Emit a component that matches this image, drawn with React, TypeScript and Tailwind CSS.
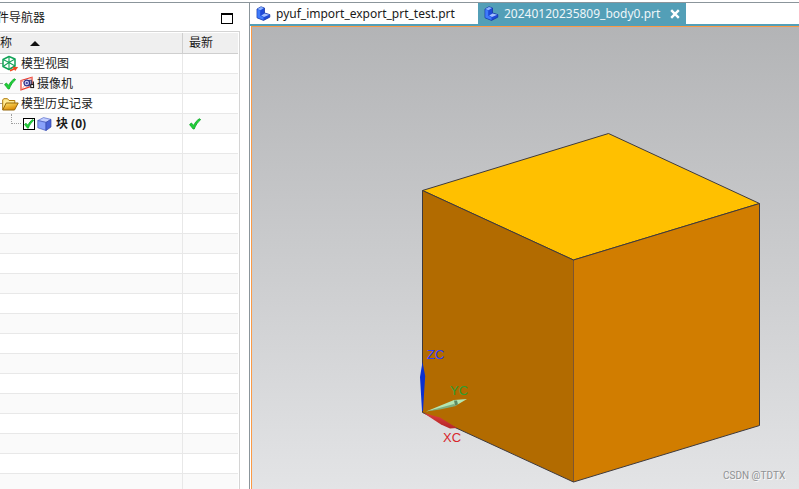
import { useState } from 'react';
import type { ReactNode } from 'react';

const EMPTY_ROWS = 18;

function GreenCheck({ className = 'h-3 w-3' }: { className?: string }) {
  return (
    <svg viewBox="0 0 12 12" className={className} aria-hidden="true">
      <path
        d="M0.6 6.6 2.4 5 4.6 7.4C6 4.6 8 2 10.6 0.7L11.6 1.8C8.8 4 6.8 7 5.2 11L4.2 11Z"
        fill="#1fd136"
        stroke="#12a92c"
        strokeWidth="0.9"
        strokeLinejoin="round"
      />
    </svg>
  );
}

function ModelViewIcon() {
  return (
    <svg viewBox="0 0 17 17" className="h-[17px] w-[17px] shrink-0" fill="none" aria-hidden="true">
      <path
        d="M7 1.5 13 4V11L7 14.5 1 11.5V4.5Z"
        stroke="#12a357"
        strokeWidth="1.5"
        strokeLinejoin="round"
      />
      <path d="M1 4.5 7 7.5 13 4M7 7.5V14.5M7 1.5V7.5L1 11.5M7 7.5 13 11" stroke="#12a357" strokeWidth="1.1" />
      <path d="M8 15.8 13.5 13.3" stroke="#f04a20" strokeWidth="1.6" />
      <path d="M10.5 11.7 16.2 11.9 13.2 16Z" fill="#f04a20" />
    </svg>
  );
}

function CameraIcon() {
  return (
    <svg viewBox="0 0 15 15" className="h-[15px] w-[15px] shrink-0" fill="none" aria-hidden="true">
      <path d="M1 4.5 12 1.2V10L1 13.8Z" fill="#fff" stroke="#ee3a2c" strokeWidth="1.2" />
      <path d="M1 4.5 11 11M1 13.8 12 1.2" stroke="#f28a80" strokeWidth="0.8" />
      <path d="M8 4.8 11.5 4.2V9.5L8 9.8Z" fill="#9a9cc0" stroke="#32325c" strokeWidth="0.8" />
      <circle cx="6.8" cy="7" r="2.8" fill="#c6caf0" stroke="#2c2f86" strokeWidth="1.2" />
      <circle cx="6.8" cy="7" r="1.1" fill="#39399a" />
      <path d="M13.3 5.5V8.5" stroke="#111" strokeWidth="1.2" />
      <rect x="10.8" y="8.6" width="2.8" height="3" fill="#fff" stroke="#111" />
    </svg>
  );
}

function FolderIcon() {
  return (
    <svg viewBox="0 0 17 14" className="h-[14px] w-[17px] shrink-0" aria-hidden="true">
      <defs>
        <linearGradient id="folder" x1="0" y1="0" x2="0.5" y2="1">
          <stop offset="0" stopColor="#ffe56a" />
          <stop offset="1" stopColor="#dc8c08" />
        </linearGradient>
      </defs>
      <path d="M0.7 12.8V3L1.7 1.7H5.5L7 3.5H12.8V6" fill="#ffeb94" stroke="#b07a08" />
      <path d="M0.7 13 4.2 6H16.2L12.5 13Z" fill="url(#folder)" stroke="#94660a" strokeLinejoin="round" />
    </svg>
  );
}

function BlockIcon() {
  return (
    <svg viewBox="0 0 15 14" className="h-[14px] w-[15px] shrink-0" strokeLinejoin="round" aria-hidden="true">
      <path d="M0.8 3.5 6.5 0.6 14 2.4 9 5.4Z" fill="#c3cfff" stroke="#5468c8" strokeWidth="0.7" />
      <path d="M0.8 3.5 9 5.4V13.5L0.8 10.8Z" fill="#8aa2fa" stroke="#4358bc" strokeWidth="0.7" />
      <path d="M9 5.4 14 2.4V10L9 13.5Z" fill="#4a63d6" stroke="#3347ac" strokeWidth="0.7" />
    </svg>
  );
}

function PartIcon() {
  return (
    <svg viewBox="0 0 15 15" className="h-[15px] w-[15px] shrink-0" strokeLinejoin="round" aria-hidden="true">
      <path d="M1 3 5 0.8 8.5 2V7L13.8 8.6V11.2L7.5 14.4 1 11.8Z" fill="#1d49d8" stroke="#1737a6" strokeWidth="0.8" />
      <path d="M1.2 3 5 1 8 2.1 4.4 4.2Z" fill="#8db4ff" />
      <path d="M1.3 3.4 4.2 4.4V9.8L7.5 11.2V14L1.3 11.6Z" fill="#3f7bfa" />
      <path d="M5.2 9.4 8.6 7.5 13.2 8.8 8 11Z" fill="#a3c0ff" />
    </svg>
  );
}

function TreeStub() {
  return <span className="w-0.5 shrink-0 border-t border-dotted border-[#a0a0a0]" />;
}

function TreeRow({ name, latest, odd }: { name?: ReactNode; latest?: ReactNode; odd: boolean }) {
  return (
    <tr className={odd ? 'bg-[#fafafa]' : 'bg-white'}>
      <td className="h-5 border-r border-b border-[#e8e8e8] p-0">{name}</td>
      <td className="h-5 border-b border-[#e8e8e8] p-0">{latest}</td>
    </tr>
  );
}

function Navigator() {
  const [visible, setVisible] = useState(true);

  const rows: { name: ReactNode; latest?: ReactNode }[] = [
    {
      name: (
        <div className="flex items-center">
          <TreeStub />
          <ModelViewIcon />
          <span className="ml-0.5">模型视图</span>
        </div>
      ),
    },
    {
      name: (
        <div className="flex items-center">
          <TreeStub />
          <GreenCheck className="ml-0.5 h-3 w-3 shrink-0" />
          <span className="ml-1 flex items-center gap-0.5">
            <CameraIcon />
            摄像机
          </span>
        </div>
      ),
    },
    {
      name: (
        <div className="flex items-center">
          <TreeStub />
          <FolderIcon />
          <span className="ml-0.5">模型历史记录</span>
        </div>
      ),
    },
    {
      name: (
        <div className="flex h-[19px] items-center pl-[11px]">
          <span className="mr-0.5 h-2.5 w-2.5 self-start border-b border-l border-dotted border-[#a0a0a0]" />
          <label className="flex items-center">
            <span className="relative mr-0.5 flex h-3 w-3">
              <input
                type="checkbox"
                checked={visible}
                onChange={e => setVisible(e.target.checked)}
                className="h-3 w-3 appearance-none border border-black bg-white"
              />
              {visible && <GreenCheck className="pointer-events-none absolute inset-px h-2.5 w-2.5" />}
            </span>
            <BlockIcon />
            <span className="ml-1 font-bold">块 (0)</span>
          </label>
        </div>
      ),
      latest: <GreenCheck className="ml-1.5 h-3 w-3" />,
    },
  ];

  return (
    <aside className="flex w-[249px] shrink-0 flex-col bg-white text-xs text-[#1a1a1a]">
      <div className="flex h-7 shrink-0 items-center justify-between pt-0.5 pr-4">
        <h1 className="-ml-[3px]">件导航器</h1>
        <button type="button" aria-label="Maximize" className="h-[11px] w-3 border border-t-2 border-black" />
      </div>
      <div className="mr-[9px] min-h-0 flex-1 overflow-hidden border-t border-r border-[#d4d4d4] pt-px pr-px">
        <table className="w-full table-fixed border-separate border-spacing-0 leading-4">
          <thead>
            <tr className="bg-[#efefef] text-left">
              <th className="h-[21px] w-[183px] border-r border-b border-[#cfcfcf] p-0 font-normal">
                <span className="flex items-center gap-[18px]">
                  称
                  <svg viewBox="0 0 10 5" className="h-[5px] w-2.5" aria-hidden="true">
                    <path d="M0 5 5 0 10 5Z" fill="#111" />
                  </svg>
                </span>
              </th>
              <th className="h-[21px] border-b border-[#cfcfcf] p-0 pl-1.5 font-normal">最新</th>
            </tr>
          </thead>
          <tbody>
            {rows.map((row, i) => (
              <TreeRow key={i} name={row.name} latest={row.latest} odd={i % 2 === 1} />
            ))}
            {Array.from({ length: EMPTY_ROWS }, (_, i) => (
              <TreeRow key={`empty-${i}`} odd={i % 2 === 1} />
            ))}
          </tbody>
        </table>
      </div>
    </aside>
  );
}

function FileTabs() {
  return (
    <nav className="flex h-[23px] shrink-0 border-b-2 border-[#539fb7] bg-white font-['Noto_Sans','Noto_Sans_CJK_SC',sans-serif] text-xs">
      <button type="button" className="flex w-[228px] items-center gap-[5px] pl-1.5 text-[#1a1a1a]">
        <PartIcon />
        <span>pyuf_import_export_prt_test.prt</span>
      </button>
      <div className="flex w-[208px] items-center justify-between bg-[#539fb7] px-1.5 text-[#eef6f9]">
        <button type="button" className="flex items-center gap-[5px]">
          <PartIcon />
          <span>20240120235809_body0.prt</span>
        </button>
        <button type="button" aria-label="Close">
          <svg viewBox="0 0 10 10" className="h-2.5 w-2.5" aria-hidden="true">
            <path d="M1.2 1.2 8.8 8.8M8.8 1.2 1.2 8.8" stroke="#fff" strokeWidth="2.4" />
          </svg>
        </button>
      </div>
    </nav>
  );
}

function Viewport() {
  return (
    <div className="min-h-0 flex-1 border-t border-l border-[#fb9a45] bg-linear-to-b from-[#b3b4b6] to-[#e3e4e6]">
      <svg
        viewBox="0 0 547 462"
        preserveAspectRatio="xMidYMid slice"
        className="h-full w-full font-['Liberation_Sans',Arial,sans-serif]"
      >
        <defs>
          <linearGradient id="x-axis" x1="0" y1="1" x2="0.4" y2="0">
            <stop offset="0" stopColor="#a31d1d" />
            <stop offset="1" stopColor="#e04040" />
          </linearGradient>
        </defs>

        {/* Solid body */}
        <g stroke="#3f3a3c" strokeWidth="1" strokeLinejoin="round">
          <path d="M170.5 163.5 356.5 106.5 507.5 176.5 321.5 233Z" fill="#ffc000" />
          <path d="M170.5 163.5 321.5 233V455L170.5 385.5Z" fill="#b26b00" />
          <path d="M321.5 233 507.5 176.5V398.5L321.5 455Z" fill="#d17d00" />
        </g>
        <path d="M321.5 233.5V454.5" stroke="#7d5530" />

        {/* Work coordinate system */}
        <path d="M170.5 335 173.2 349 172 367 171 384H170L168 350Z" fill="#0a30d0" />
        <path d="M171.5 386 188 390.5 205 401 198 401.5 189 397.5Z" fill="url(#x-axis)" />
        <path d="M174 384.5 202 373 215 372 204 378.5 186 382Z" fill="#b4e6b0" />
        <path d="M174 384.5 202 377 204 379 188 382.5Z" fill="#7fae7c" />
        <path d="M202 373.5 205 373.5 206 377.5 203 378.5Z" fill="#5d8a62" />
        <g fontSize="13">
          <text x="175" y="332" fill="#2c3cff">ZC</text>
          <text x="198" y="368" fill="#2f9e30">YC</text>
          <text x="191" y="415" fill="#d8262c">XC</text>
        </g>

        <g fontSize="10" className="font-['Roboto',sans-serif]">
          <text x="472" y="453" fill="#fafafa">CSDN @TDTX</text>
          <text x="471" y="452" fill="#909294">CSDN @TDTX</text>
        </g>
      </svg>
    </div>
  );
}

export default function App() {
  return (
    <div className="flex h-screen flex-col overflow-hidden bg-white pt-0.5 font-['Noto_Sans','Noto_Sans_CJK_SC',sans-serif]">
      <div className="flex min-h-0 flex-1 border-t border-[#8b959b]">
        <Navigator />
        <main className="flex min-w-0 flex-1 flex-col border-l border-[#8b959b]">
          <FileTabs />
          <div className="flex min-h-0 flex-1 pl-px">
            <Viewport />
          </div>
        </main>
      </div>
    </div>
  );
}
